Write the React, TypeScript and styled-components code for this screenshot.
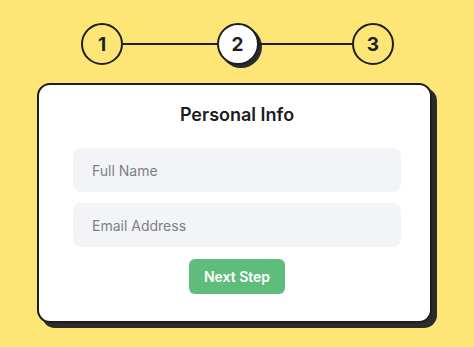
import React from 'react'
import styled, { createGlobalStyle } from 'styled-components'

const GlobalStyle = createGlobalStyle`
  html, body {
    margin: 0;
    padding: 0;
    background: #fde676;
    font-family: Inter, 'Noto Sans', sans-serif;
  }
`

const Page = styled.div`
  width: 474px;
  height: 347px;
  padding-top: 23px;
  box-sizing: border-box;
  display: flex;
  flex-direction: column;
  align-items: center;
`

const Stepper = styled.div`
  display: flex;
  align-items: center;
  width: 313px;
  margin-left: 1px;
`

const Circle = styled.div<{ active?: boolean }>`
  flex: none;
  width: 42px;
  height: 42px;
  box-sizing: border-box;
  border: 2px solid #1e1e1e;
  border-radius: 50%;
  background: ${(p) => (p.active ? '#ffffff' : 'transparent')};
  box-shadow: ${(p) => (p.active ? '3px 3px 0 #2a2a2a' : 'none')};
  display: flex;
  align-items: center;
  justify-content: center;
  font-size: 19px;
  font-weight: 700;
  color: #1e1e1e;
`

const Line = styled.div`
  flex: 1;
  height: 2px;
  background: #1e1e1e;
`

const Card = styled.div`
  margin-top: 18px;
  margin-right: 5px;
  width: 395px;
  height: 240px;
  box-sizing: border-box;
  background: #ffffff;
  border: 2px solid #1e1e1e;
  border-radius: 13px;
  box-shadow: 5px 5px 0 #2b2b2b;
  padding: 18px 29px 0 34px;
  display: flex;
  flex-direction: column;
  align-items: center;
`

const Title = styled.h2`
  margin: 0;
  font-size: 18px;
  line-height: 24px;
  font-weight: 600;
  color: #1c1c1c;
`

const Field = styled.input<{ $gap: number }>`
  width: 100%;
  height: 44px;
  box-sizing: border-box;
  border: none;
  outline: none;
  border-radius: 8px;
  background: #f3f4f7;
  padding: 0 19px;
  margin-top: ${(p) => p.$gap}px;
  font-family: inherit;
  font-size: 14px;
  color: #333;
  &::placeholder {
    color: #7c7f87;
  }
`

const Button = styled.button`
  margin-top: 12px;
  width: 96px;
  height: 35px;
  border: none;
  border-radius: 6px;
  background: #5fbd7b;
  color: #ffffff;
  font-family: inherit;
  font-size: 14px;
  font-weight: 600;
  cursor: pointer;
`

export default function App() {
  return (
    <>
      <GlobalStyle />
      <Page>
        <Stepper>
          <Circle>1</Circle>
          <Line />
          <Circle active>2</Circle>
          <Line />
          <Circle>3</Circle>
        </Stepper>
        <Card>
          <Title>Personal Info</Title>
          <Field $gap={21} placeholder='Full Name' />
          <Field $gap={11} placeholder='Email Address' />
          <Button>Next Step</Button>
        </Card>
      </Page>
    </>
  )
}
